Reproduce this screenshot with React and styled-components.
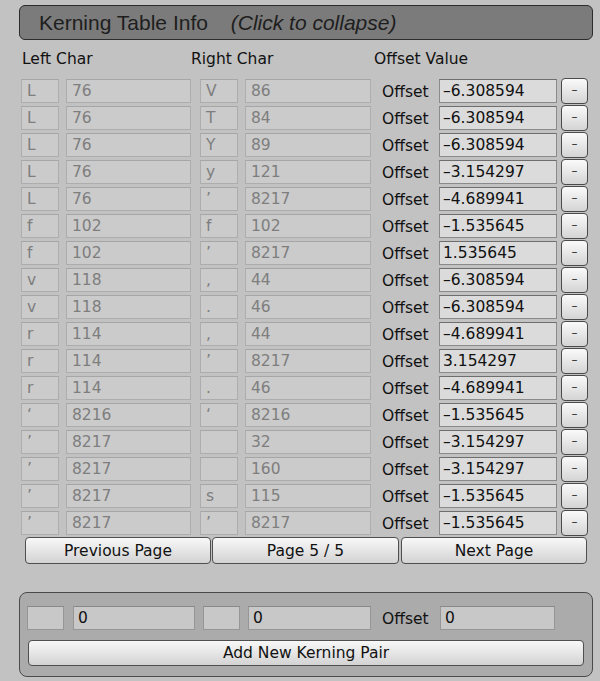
import React from "react";
import styled, { createGlobalStyle } from "styled-components";

const GlobalStyle = createGlobalStyle`
    html, body {
        margin: 0;
        padding: 0;
        background: #c2c2c2;
    }
    body {
        font-family: "DejaVu Sans", "Noto Sans", sans-serif;
        font-size: 15.5px;
        color: #111;
    }
`;

const pairs = [
    ['L', 76, 'V', 86, '–6.308594'],
    ['L', 76, 'T', 84, '–6.308594'],
    ['L', 76, 'Y', 89, '–6.308594'],
    ['L', 76, 'y', 121, '–3.154297'],
    ['L', 76, '’', 8217, '–4.689941'],
    ['f', 102, 'f', 102, '–1.535645'],
    ['f', 102, '’', 8217, '1.535645'],
    ['v', 118, ',', 44, '–6.308594'],
    ['v', 118, '.', 46, '–6.308594'],
    ['r', 114, ',', 44, '–4.689941'],
    ['r', 114, '’', 8217, '3.154297'],
    ['r', 114, '.', 46, '–4.689941'],
    ['‘', 8216, '‘', 8216, '–1.535645'],
    ['’', 8217, ' ', 32, '–3.154297'],
    ['’', 8217, '\u00a0', 160, '–3.154297'],
    ['’', 8217, 's', 115, '–1.535645'],
    ['’', 8217, '’', 8217, '–1.535645'],
];

class App extends React.PureComponent {

    renderRows = () => {
        return pairs.map((item, index) => (
            <Row key={index}>
                <Field width={38} disabled>{item[0]}</Field>
                <Field width={125} gap={7} disabled>{item[1]}</Field>
                <Field width={38} gap={9} disabled>{item[2]}</Field>
                <Field width={126} gap={7} disabled>{item[3]}</Field>
                <OffsetLabel>Offset</OffsetLabel>
                <Field width={118} active>{item[4]}</Field>
                <MinusButton>–</MinusButton>
            </Row>
        ));
    };

    render() {
        return (
            <Root>
                <GlobalStyle/>
                <Foldout>
                    Kerning Table Info <Hint>(Click to collapse)</Hint>
                </Foldout>
                <ColumnHeads>
                    <ColumnHead width={169}>Left Char</ColumnHead>
                    <ColumnHead width={183}>Right Char</ColumnHead>
                    <ColumnHead>Offset Value</ColumnHead>
                </ColumnHeads>
                <Rows>
                    {this.renderRows()}
                </Rows>
                <Pager>
                    <PageButton width={186}>Previous Page</PageButton>
                    <PageButton width={187} gap={1}>Page 5 / 5</PageButton>
                    <PageButton width={186} gap={2}>Next Page</PageButton>
                </Pager>
                <NewPairPanel>
                    <Row>
                        <Field width={37} light/>
                        <Field width={122} gap={9} light>0</Field>
                        <Field width={37} gap={8} light/>
                        <Field width={123} gap={8} light>0</Field>
                        <OffsetLabel>Offset</OffsetLabel>
                        <Field width={115} gap={1} light>0</Field>
                    </Row>
                    <AddButton>Add New Kerning Pair</AddButton>
                </NewPairPanel>
            </Root>
        );
    }
}

export default App;


const Root = styled.div`
    width: 600px;
    padding-top: 5px;
`;

const Foldout = styled.div`
    margin-left: 19px;
    width: 574px;
    height: 35px;
    box-sizing: border-box;
    display: flex;
    align-items: center;
    padding-left: 19px;
    background: #7b7b7b;
    border: 1px solid #2c2c2c;
    border-radius: 6px;
    font-family: "Liberation Sans", Arial, sans-serif;
    font-size: 21px;
    color: #1e1e1e;
    white-space: pre;
`;

const Hint = styled.span`
    font-style: italic;
    margin-left: 17px;
`;

const ColumnHeads = styled.div`
    display: flex;
    align-items: center;
    height: 34px;
    padding: 2px 0 0 22px;
    margin-bottom: 3px;
`;

const ColumnHead = styled.div`
    width: ${p => p.width ? p.width + 'px' : 'auto'};
    color: #111;
`;

const Rows = styled.div`
    display: flex;
    flex-direction: column;
    gap: 3px;
    padding-left: 21px;
`;

const Row = styled.div`
    display: flex;
    align-items: center;
    height: 24px;
`;

const Field = styled.div`
    width: ${p => p.width}px;
    margin-left: ${p => p.gap || 0}px;
    height: 24px;
    box-sizing: border-box;
    padding: 2px 0 0 5px;
    display: flex;
    align-items: center;
    white-space: pre;
    line-height: 1;
    border: 1px solid #adadad;
    border-top-color: #a6a6a6;
    background: #cbcbcb;
    color: #7e7e7e;

    ${p => p.active && `
        background: #dbdbdb;
        border-color: #8a8a8a;
        border-top-color: #6e6e6e;
        color: #111;
        padding-left: 3px;
    `}

    ${p => p.light && `
        background: #c8c8c8;
        border-color: #969696;
        border-top-color: #888888;
        color: #111;
        padding-left: 4px;
    `}
`;

const OffsetLabel = styled.div`
    width: 68px;
    box-sizing: border-box;
    padding: 2px 0 0 11px;
    color: #111;
`;

const MinusButton = styled.div`
    width: 27px;
    height: 26px;
    margin-left: 4px;
    box-sizing: border-box;
    padding-bottom: 3px;
    display: flex;
    align-items: center;
    justify-content: center;
    border: 1px solid #4a4a4a;
    border-radius: 4px;
    background: linear-gradient(#fafafa, #d4d4d4);
    color: #333;
    font-size: 12px;
    line-height: 1;
`;

const Pager = styled.div`
    display: flex;
    padding-left: 25px;
    margin-top: 2px;
`;

const PageButton = styled.div`
    width: ${p => p.width}px;
    margin-left: ${p => p.gap || 0}px;
    height: 27px;
    box-sizing: border-box;
    display: flex;
    align-items: center;
    justify-content: center;
    border: 1px solid #4f4f4f;
    border-radius: 4px;
    background: linear-gradient(#f8f8f8, #d3d3d3);
    color: #111;
`;

const NewPairPanel = styled.div`
    margin: 28px 0 0 19px;
    width: 574px;
    height: 85px;
    box-sizing: border-box;
    padding: 13px 0 0 7px;
    background: #ababab;
    border: 1px solid #4a4a4a;
    border-radius: 8px;
    display: flex;
    flex-direction: column;
    gap: 10px;
`;

const AddButton = styled.div`
    width: 556px;
    height: 26px;
    margin-left: 1px;
    box-sizing: border-box;
    display: flex;
    align-items: center;
    justify-content: center;
    border: 1px solid #4f4f4f;
    border-radius: 4px;
    background: linear-gradient(#f8f8f8, #d3d3d3);
    color: #111;
`;
